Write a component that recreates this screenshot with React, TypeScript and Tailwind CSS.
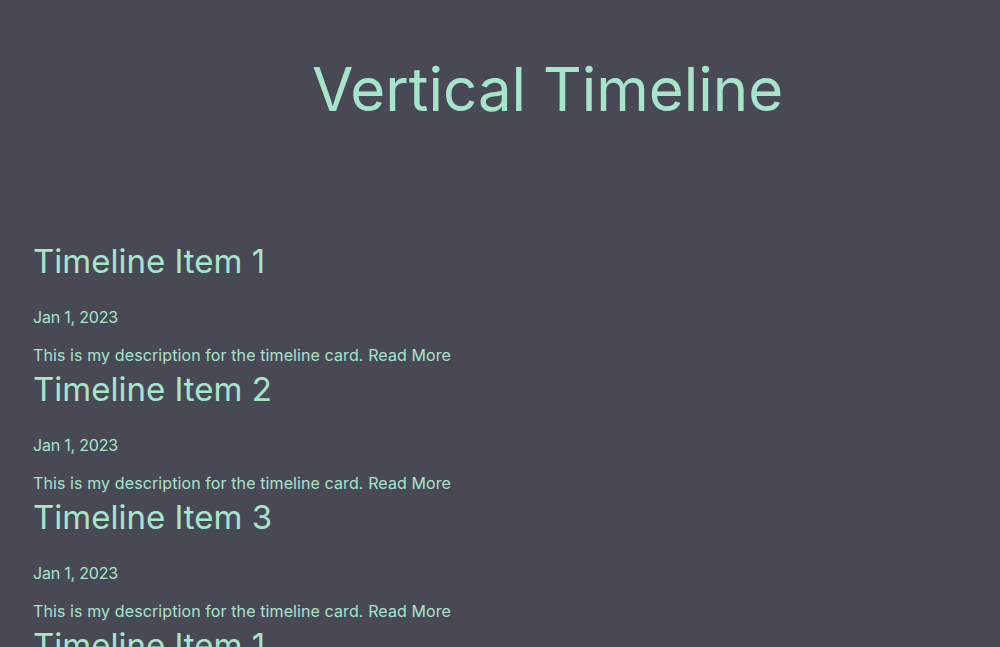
export default function App() {
  const items = [1, 2, 3, 1];
  return (
    <div
      className="h-[647px] overflow-hidden bg-[#494955] text-[#a6e5cb]"
      style={{ fontFamily: "Inter, 'Noto Sans', sans-serif" }}
    >
      <h1 className="pt-[52px] pl-[312px] text-[60px] leading-[75px] font-normal">
        Vertical Timeline
      </h1>
      <div className="pl-[33px] pt-[114px] flex flex-col">
        {items.map((n, i) => (
          <div key={i} className="flex flex-col h-[128px]">
            <h2 className="text-[33px] leading-[40px] font-normal">Timeline Item {n}</h2>
            <p className="mt-[24px] text-[16px] leading-[24px] tracking-[-0.2px]">Jan 1, 2023</p>
            <p className="mt-[14px] text-[16px] leading-[24px] tracking-[0.1px]">
              This is my description for the timeline card. Read More
            </p>
          </div>
        ))}
      </div>
    </div>
  );
}
